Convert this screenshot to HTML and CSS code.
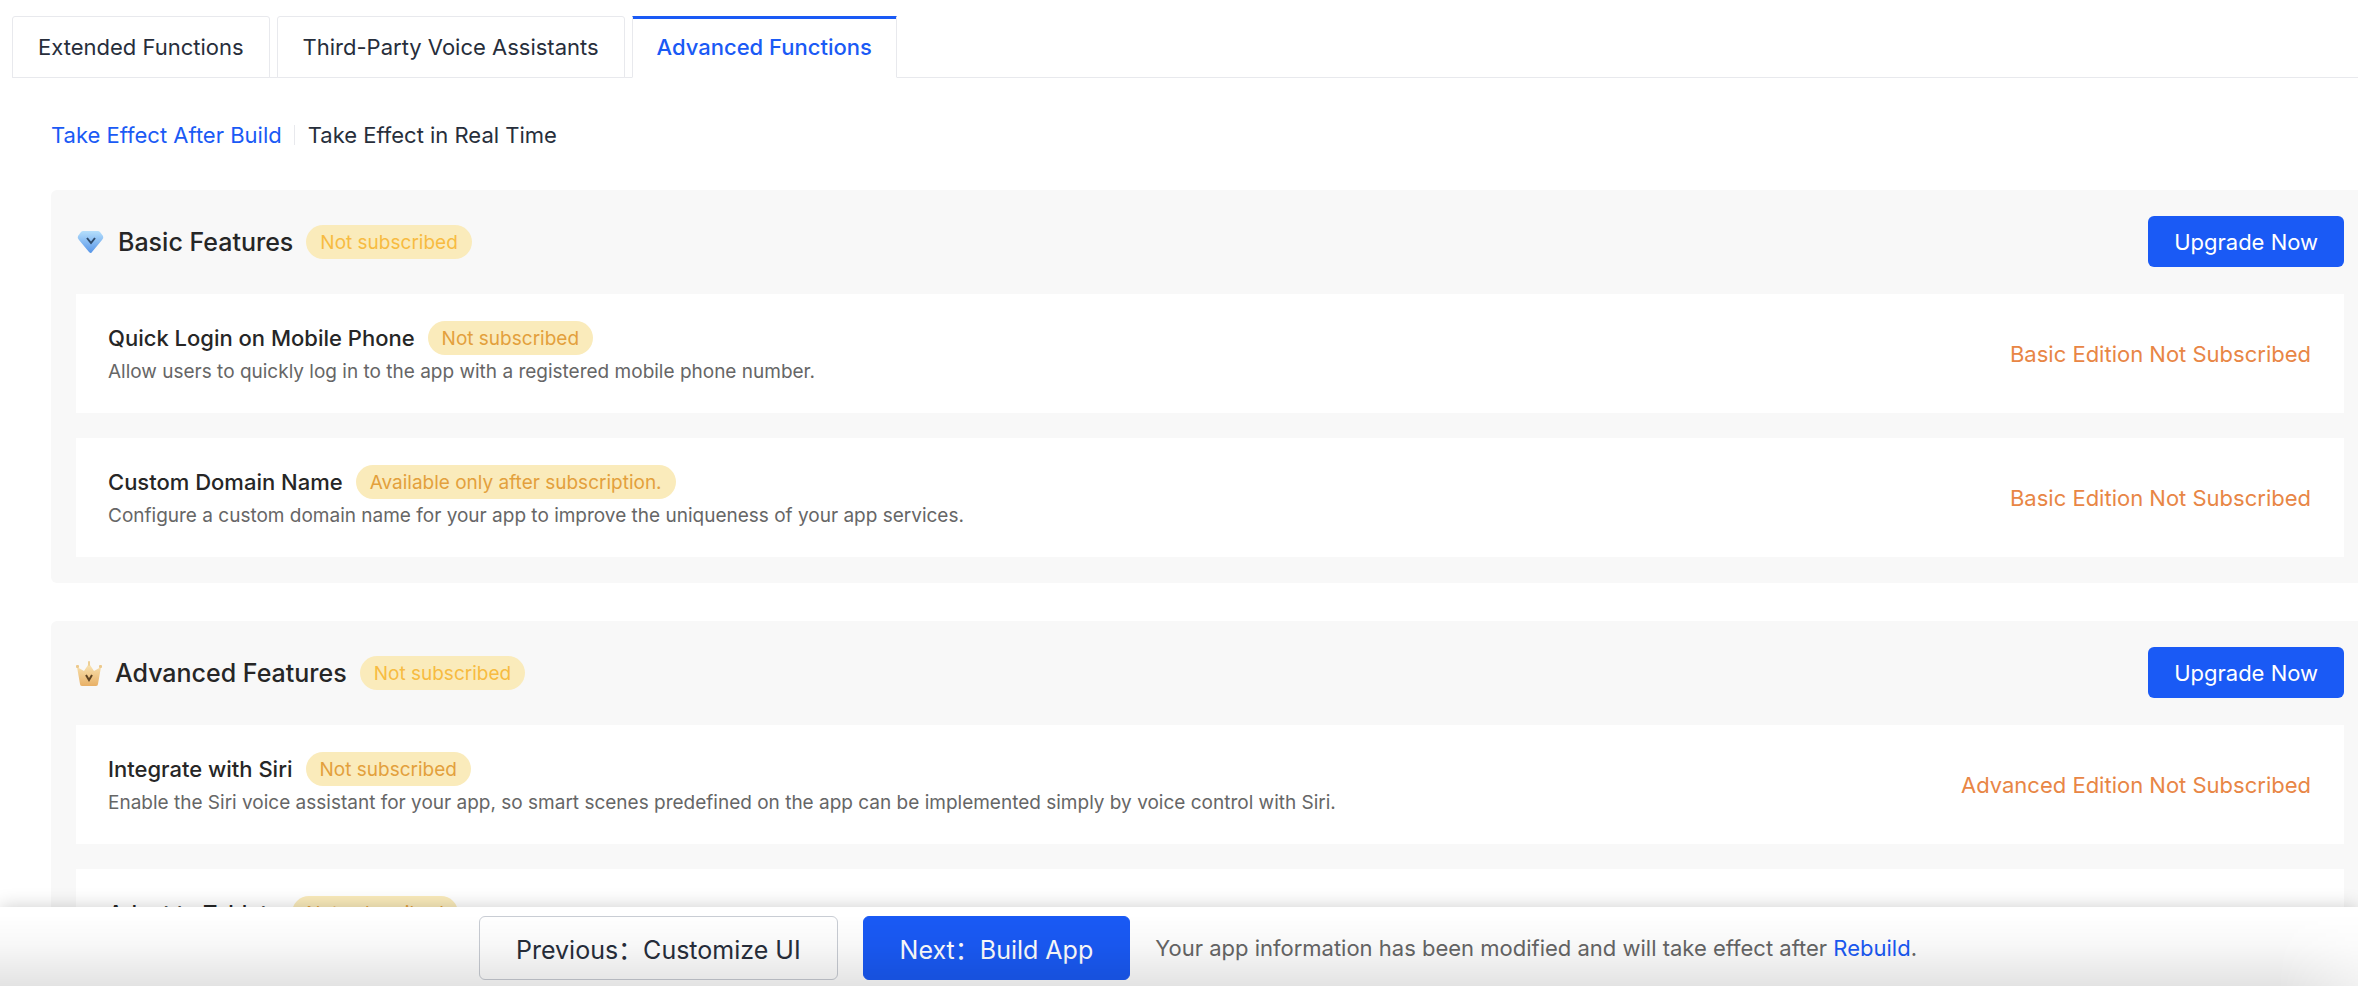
FILE: index.html
```html
<!DOCTYPE html>
<html lang="en">
<head>
    <meta charset="UTF-8">
    <meta name="viewport" content="width=device-width, initial-scale=1.0">
    <title>Advanced Functions</title>
    <link rel="stylesheet" href="styles.css">
</head>
<body>
    <div class="page">
        <main class="content">
            <nav class="tabs">
                <button type="button" class="tab">Extended Functions</button>
                <button type="button" class="tab">Third-Party Voice Assistants</button>
                <button type="button" class="tab active">Advanced Functions</button>
            </nav>

            <div class="sub-tabs">
                <a href="#build" class="sub-tab active">Take Effect After Build</a>
                <a href="#realtime" class="sub-tab">Take Effect in Real Time</a>
            </div>

            <section class="panel">
                <div class="panel-header">
                    <svg class="icon icon-gem" viewBox="0 0 28 28" aria-hidden="true">
                        <defs>
                            <linearGradient id="gem" x1="0" y1="0" x2="0" y2="1">
                                <stop offset="0" stop-color="#b5dffc"/>
                                <stop offset="1" stop-color="#5795e8"/>
                            </linearGradient>
                        </defs>
                        <path d="M7 3h15q1 0 2 1l3 4q1 2-1 4L16 24q-1 2-3 0L3 12q-2-2-1-4l3-4q1-1 2-1z" fill="url(#gem)"/>
                        <path d="M11 10l4 5 4-5" fill="none" stroke="#2d4a6b" stroke-width="2"/>
                    </svg>
                    <h2>Basic Features</h2>
                    <span class="tag tag-light">Not subscribed</span>
                    <button type="button" class="btn-upgrade">Upgrade Now</button>
                </div>
                <div class="item">
                    <div class="item-info">
                        <div class="item-title">
                            <h3>Quick Login on Mobile Phone</h3>
                            <span class="tag">Not subscribed</span>
                        </div>
                        <p>Allow users to quickly log in to the app with a registered mobile phone number.</p>
                    </div>
                    <span class="status">Basic Edition Not Subscribed</span>
                </div>
                <div class="item">
                    <div class="item-info">
                        <div class="item-title">
                            <h3>Custom Domain Name</h3>
                            <span class="tag">Available only after subscription.</span>
                        </div>
                        <p>Configure a custom domain name for your app to improve the uniqueness of your app services.</p>
                    </div>
                    <span class="status">Basic Edition Not Subscribed</span>
                </div>
            </section>

            <section class="panel">
                <div class="panel-header">
                    <svg class="icon icon-crown" viewBox="0 0 26 28" aria-hidden="true">
                        <defs>
                            <linearGradient id="crown" x1="0" y1="0" x2="0" y2="1">
                                <stop offset="0" stop-color="#f8e2b0"/>
                                <stop offset="1" stop-color="#e8b066"/>
                            </linearGradient>
                        </defs>
                        <path d="M1 8l7 4 4-6h2l4 6 7-4-3 17q0 2-2 2H6q-2 0-2-2z" fill="url(#crown)"/>
                        <rect x="12" y="2" width="2" height="5" rx="1" fill="#edcf96"/>
                        <rect x="0" y="6" width="3" height="3" rx="1" fill="#ecc98c"/>
                        <rect x="23" y="6" width="3" height="3" rx="1" fill="#ecc98c"/>
                        <path d="M10 16l3 5 3-5" fill="none" stroke="#5e4423" stroke-width="2"/>
                    </svg>
                    <h2>Advanced Features</h2>
                    <span class="tag tag-light">Not subscribed</span>
                    <button type="button" class="btn-upgrade">Upgrade Now</button>
                </div>
                <div class="item">
                    <div class="item-info">
                        <div class="item-title">
                            <h3>Integrate with Siri</h3>
                            <span class="tag">Not subscribed</span>
                        </div>
                        <p>Enable the Siri voice assistant for your app, so smart scenes predefined on the app can be implemented simply by voice control with Siri.</p>
                    </div>
                    <span class="status">Advanced Edition Not Subscribed</span>
                </div>
                <div class="item">
                    <div class="item-info">
                        <div class="item-title">
                            <h3>Adapt to Tablets</h3>
                            <span class="tag">Not subscribed</span>
                        </div>
                    </div>
                </div>
            </section>
        </main>

        <footer class="footer">
            <button type="button" class="btn btn-prev">Previous：Customize UI</button>
            <button type="button" class="btn btn-next">Next：Build App</button>
            <p>Your app information has been modified and will take effect after <a href="#rebuild">Rebuild</a>.</p>
        </footer>
    </div>
</body>
</html>
```

FILE: styles.css
```css
* {
    box-sizing: border-box;
}

body {
    margin: 0;
    font-family: Inter, "Noto Sans CJK SC", sans-serif;
    font-size: 22px;
    color: #262626;
    background: #fff;
}

h2, h3, p {
    margin: 0;
}

a {
    text-decoration: none;
}

button {
    font-family: inherit;
    cursor: pointer;
}

.page {
    display: flex;
    flex-direction: column;
    height: 100vh;
}

.content {
    flex: 1;
    min-height: 0;
    padding-top: 16px;
    overflow: hidden auto;
    scrollbar-width: none;
}

/* tabs */
.tabs {
    display: flex;
    gap: 7px;
    margin-left: 12px;
    box-shadow: inset 0 -1px #e8e9ed;
}

.tab {
    height: 62px;
    padding: 0 25px;
    font-size: 22px;
    color: #272e3b;
    background: #fff;
    border: 1px solid #e8e9ed;
    border-radius: 3px 3px 0 0;
}

.tab.active {
    padding: 0 24px;
    font-weight: 500;
    color: #1a5af5;
    border-top-color: #1a5af5;
    border-bottom-color: #fff;
    border-radius: 0;
    box-shadow: inset 0 2px #1a5af5;
}

.sub-tabs {
    display: flex;
    align-items: center;
    margin: 42px 0 40px 51px;
    line-height: 30px;
}

.sub-tab {
    color: #272e3b;
}

.sub-tab.active {
    color: #1a5af5;
}

.sub-tab + .sub-tab {
    margin-left: 12px;
    padding-left: 14px;
    background: linear-gradient(#e8e9ed, #e8e9ed) left / 1px 20px no-repeat;
}

/* panels */
.panel {
    margin: 0 0 38px 51px;
    padding: 26px 14px 26px 25px;
    background: #f8f8f8;
    border-radius: 6px 0 0 6px;
}

.panel-header {
    display: flex;
    align-items: center;
    margin-bottom: 27px;
}

.panel-header h2 {
    font-size: 25px;
    font-weight: 500;
    line-height: 36px;
}

.icon {
    flex: none;
    height: 28px;
}

.icon-gem {
    width: 28px;
    margin-right: 14px;
}

.icon-crown {
    width: 26px;
    margin-right: 13px;
}

.tag {
    margin-left: 13px;
    padding: 2px 14px 0;
    font-size: 19px;
    line-height: 32px;
    color: #e3a03c;
    background: #faebbb;
    border-radius: 17px;
}

.tag-light {
    color: #f7bb41;
}

.btn-upgrade {
    height: 51px;
    margin-left: auto;
    padding: 0 26px;
    font-size: 22px;
    color: #fff;
    background: #1a5af5;
    border: none;
    border-radius: 6px;
}

.item {
    display: flex;
    align-items: center;
    justify-content: space-between;
    min-height: 119px;
    padding: 0 33px 0 32px;
    background: #fff;
}

.item + .item {
    margin-top: 25px;
}

.item-info {
    align-self: flex-start;
    padding: 27px 0 20px;
}

.item-title {
    display: flex;
    align-items: center;
}

.item h3 {
    font-size: 22px;
    font-weight: 500;
    line-height: 34px;
}

.item p {
    font-size: 19px;
    line-height: 34px;
    color: #666;
}

.status {
    color: #e88645;
}

/* bottom bar */
.footer {
    position: relative;
    display: flex;
    align-items: center;
    gap: 25px;
    padding: 9px 24px 6px 479px;
    background: #fff;
    box-shadow: 0 0 18px rgba(0, 0, 0, 0.2);
}

/* shade over the bar, fading out towards the right edge */
.footer::after {
    content: "";
    position: absolute;
    inset: 0;
    background: linear-gradient(rgba(0, 0, 0, 0) 10%, rgba(0, 0, 0, 0.03) 50%, rgba(0, 0, 0, 0.11));
    mask-image: linear-gradient(to left, rgba(0, 0, 0, 0.5), #000 80px);
    pointer-events: none;
}

.btn {
    height: 64px;
    padding: 0 36px;
    font-size: 25px;
    border: 1px solid #c9cdd4;
    border-radius: 6px;
}

.btn-prev {
    color: #272e3b;
    background: #fff;
}

.btn-next {
    color: #fff;
    background: #1a5af5;
    border-color: #1a5af5;
}

.footer p {
    color: #666;
}

.footer a {
    color: #1a5af5;
}
```
